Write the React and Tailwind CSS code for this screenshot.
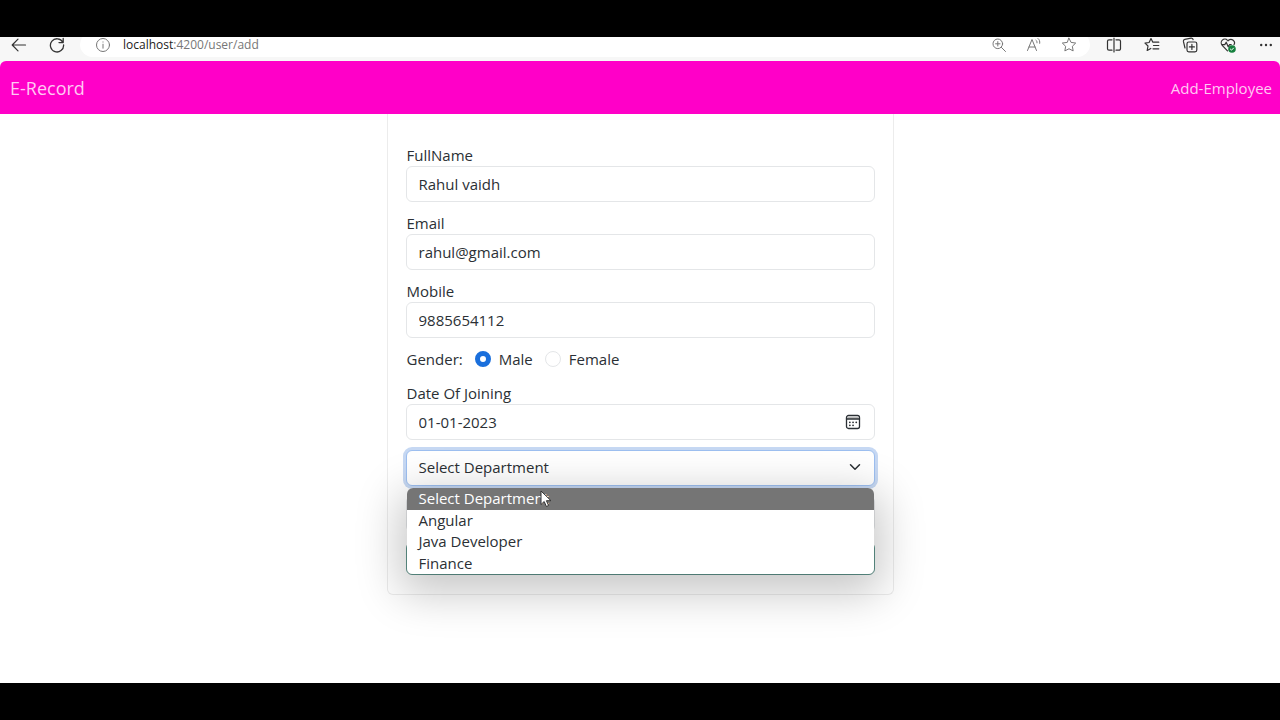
import { useState } from "react";

const departments = ["Select Department", "Angular", "Java Developer", "Finance"];

const Icon = ({ children, size = 16, className = "" }) => (
  <svg
    width={size}
    height={size}
    viewBox="0 0 16 16"
    fill="none"
    stroke="currentColor"
    strokeLinecap="round"
    strokeLinejoin="round"
    className={`shrink-0 ${className}`}
  >
    {children}
  </svg>
);

const starPath =
  "M8 1.2l2.05 4.2 4.65.65-3.35 3.25.8 4.6L8 11.75 3.85 13.9l.8-4.6L1.3 6.05l4.65-.65z";

const BrowserBar = () => (
  <div className="h-6 overflow-hidden bg-[#f7f7f7]">
    <div className="-mt-[5px] flex h-[25px] items-center text-[#333]">
      <div className="flex w-20 items-center gap-[22px] pl-[11px]">
        <button aria-label="Back">
          <Icon>
            <path d="M14.5 8H1.2M7 2.2L1.2 8 7 13.8" strokeWidth="1.2" />
          </Icon>
        </button>
        <button aria-label="Refresh">
          <Icon>
            <path d="M13.8 5.2A6.6 6.6 0 1 0 14.6 8M14.2 1.4v4.2H10" strokeWidth="1.3" />
          </Icon>
        </button>
      </div>

      <div className="flex h-full flex-1 items-center rounded-full bg-white pl-[15px] pr-[13px] text-[#777]">
        <button aria-label="Site information">
          <Icon>
            <circle cx="8" cy="8" r="6.5" />
            <path d="M8 7.2v4M8 4.9v.2" />
          </Icon>
        </button>
        <div className="ml-3 flex-1 text-[12px]">
          <span className="text-[#222]">localhost</span>:4200/user/add
        </div>
        <div className="flex items-center gap-[19px]">
          <button aria-label="Zoom">
            <Icon>
              <circle cx="6.8" cy="6.8" r="4.8" />
              <path d="M10.4 10.4l4.1 4.1M4.6 6.8h4.4M6.8 4.6V9" />
            </Icon>
          </button>
          <button aria-label="Read aloud">
            <Icon>
              <path d="M1.5 13.5L6 2.5l4.5 11M3 10h6M10 3.2c.8.6 1.1 1.5 1 2.6M12 1.5c1.5 1.2 2 2.8 1.7 4.8" />
            </Icon>
          </button>
          <button aria-label="Favorite">
            <Icon>
              <path d={starPath} />
            </Icon>
          </button>
        </div>
      </div>

      <div className="flex items-center gap-[22px] pl-4 pr-[6px]">
        <button aria-label="Split screen">
          <Icon>
            <path
              d="M6 2.8H3A1.5 1.5 0 0 0 1.5 4.3v7.4A1.5 1.5 0 0 0 3 13.2h3M10 2.8h3a1.5 1.5 0 0 1 1.5 1.5v7.4a1.5 1.5 0 0 1-1.5 1.5h-3M8 1v14"
              strokeWidth="1.2"
            />
          </Icon>
        </button>
        <button aria-label="Favorites">
          <Icon>
            <path
              d="M8.6 4.8L7 1.6 5.1 5.5l-4.1.6 3 2.9-.8 4.5 3.6-2M8.8 5.2h6M9.5 8.5h5.3M9 11.8h5.8"
              strokeWidth="1.2"
            />
          </Icon>
        </button>
        <button aria-label="Collections">
          <Icon>
            <rect x="5" y="5" width="9.8" height="9.8" rx="1.8" strokeWidth="1.2" />
            <path
              d="M9.9 7.4v5M7.4 9.9h5M3 11l-1.6-6.6A1.8 1.8 0 0 1 2.8 2.3L9 1.2a1.8 1.8 0 0 1 2.1 1.5"
              strokeWidth="1.2"
            />
          </Icon>
        </button>
        <button aria-label="Browser essentials">
          <Icon>
            <path
              d="M7.5 13.8L2.2 8.3a3.6 3.6 0 0 1 5.3-5l.5.5.5-.5a3.6 3.6 0 0 1 5.5 4.5M1.8 7.6h3l1.4-2.4 2 4.6 1.4-2.2h1.6"
              strokeWidth="1.2"
            />
            <circle cx="12" cy="12" r="3.8" fill="#15803d" stroke="none" />
            <path d="M10.4 12.1l1.1 1.1 2-2.1" stroke="#fff" />
          </Icon>
        </button>
        <button aria-label="Settings and more">
          <Icon>
            <g fill="currentColor" stroke="none">
              <circle cx="3.2" cy="8" r="1.2" />
              <circle cx="8" cy="8" r="1.2" />
              <circle cx="12.8" cy="8" r="1.2" />
            </g>
          </Icon>
        </button>
      </div>
    </div>
  </div>
);

const fieldClass =
  "block h-9 w-full rounded-md border border-[#e4e6e8] bg-white px-3 text-[15px] outline-none";

const TextField = ({ id, label, type = "text", value, onChange }) => (
  <div>
    <label htmlFor={id} className="block pl-px">
      {label}
    </label>
    <input id={id} type={type} value={value} onChange={onChange} className={fieldClass} />
  </div>
);

const GenderOption = ({ value, selected, onSelect }) => (
  <label className="flex items-center gap-2">
    <input
      type="radio"
      name="gender"
      value={value}
      checked={selected}
      onChange={() => onSelect(value)}
      className="size-4 appearance-none rounded-full border border-[#e4e6e8] bg-white checked:border-[5px] checked:border-[#1a6fdc]"
    />
    {value}
  </label>
);

const App = () => {
  const [form, setForm] = useState({
    fullName: "Rahul vaidh",
    email: "rahul@gmail.com",
    mobile: "9885654112",
    gender: "Male",
    joined: "01-01-2023",
    department: "Select Department",
    salary: "",
  });

  const update = (key) => (e) => setForm({ ...form, [key]: e.target.value });

  return (
    <div className="flex min-h-screen flex-col bg-black py-[37px] font-['Open_Sans','Noto_Sans',sans-serif] text-[15px] leading-[22px] text-[#2b3035]">
      <BrowserBar />

      {/* Navbar */}
      <div className="bg-[#f7f7f7]">
        <nav className="flex h-[53px] items-center justify-between rounded-t-md bg-[#ff00c8] pl-[10px] pr-2 text-[#ffc9f3]">
          <a href="#" className="text-[18px]">
            E-Record
          </a>
          <a href="#">Add-Employee</a>
        </nav>
      </div>

      <main className="flex-1 bg-white">
        <form className="mx-auto flex w-[507px] max-w-full flex-col gap-[10px] rounded-b-md border border-t-0 border-[#ececec] px-[18px] pb-[19px] pt-[30px]">
          <TextField id="fullName" label="FullName" value={form.fullName} onChange={update("fullName")} />
          <TextField id="email" label="Email" type="email" value={form.email} onChange={update("email")} />
          <TextField id="mobile" label="Mobile" value={form.mobile} onChange={update("mobile")} />

          {/* Gender */}
          <div className="flex items-center gap-3 pl-px">
            <span>Gender:</span>
            {["Male", "Female"].map((g) => (
              <GenderOption
                key={g}
                value={g}
                selected={form.gender === g}
                onSelect={(gender) => setForm({ ...form, gender })}
              />
            ))}
          </div>

          {/* Date of joining */}
          <div className="mt-[2px]">
            <label htmlFor="joined" className="block pl-px">
              Date Of Joining
            </label>
            <div className="relative">
              <input id="joined" value={form.joined} onChange={update("joined")} className={fieldClass} />
              <button type="button" aria-label="Open calendar" className="absolute right-[14px] top-[10px]">
                <Icon>
                  <rect x="1.5" y="1.5" width="13" height="13" rx="2" strokeWidth="1.3" />
                  <path d="M2 3h12v1.8H2z" fill="#bbb" stroke="none" />
                  <path d="M1.5 5h13" strokeWidth="1.3" />
                  <path
                    d="M4.8 8.3h.1M8 8.3h.1M11.2 8.3h.1M4.8 11.3h.1M8 11.3h.1"
                    strokeWidth="1.7"
                  />
                </Icon>
              </button>
            </div>
          </div>

          {/* Department */}
          <div className="relative">
            <select
              aria-label="Department"
              value={form.department}
              onChange={update("department")}
              className="block h-9 w-full appearance-none rounded-md border border-[#9dbff0] bg-white px-3 pb-[2px] text-[15px] shadow-[0_0_0_3px_#c6d8f3] outline-none"
            >
              {departments.map((d) => (
                <option key={d}>{d}</option>
              ))}
            </select>
            <Icon size={12} className="pointer-events-none absolute right-[14px] top-[11px]">
              <path d="M2 5l6 6 6-6" strokeWidth="2" />
            </Icon>

            <ul className="absolute inset-x-px top-[38px] z-10 grid h-[86px] overflow-hidden rounded-md bg-white leading-[21px] shadow-[0_12px_44px_8px_rgba(0,0,0,0.22)]">
              {departments.map((d) => (
                <li
                  key={d}
                  className={d === form.department ? "bg-[#757575] px-3 text-white" : "px-3"}
                >
                  {d}
                </li>
              ))}
            </ul>

            {/* Mouse pointer */}
            <svg width="12" height="18" viewBox="0 0 12 18" className="absolute left-[134px] top-10 z-20">
              <path
                d="M1 1v13.5l3.2-3 2.2 5 2.2-1-2.2-4.8H11z"
                fill="#fff"
                stroke="#333"
                strokeWidth="1"
              />
            </svg>
          </div>

          <input aria-label="Salary" value={form.salary} onChange={update("salary")} className={fieldClass} />
          <button
            type="button"
            aria-label="Add"
            className="h-[33px] rounded-md border border-[#5f958c] bg-white"
          />
        </form>
      </main>
    </div>
  );
};

export default App;
